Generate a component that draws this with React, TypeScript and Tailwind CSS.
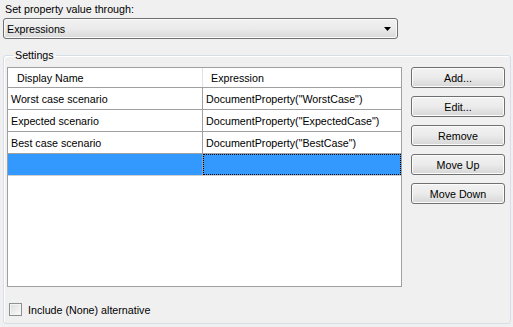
import * as React from "react";

const rows = [
	{ name: "Worst case scenario", expr: 'DocumentProperty("WorstCase")' },
	{ name: "Expected scenario", expr: 'DocumentProperty("ExpectedCase")' },
	{ name: "Best case scenario", expr: 'DocumentProperty("BestCase")' },
];

const buttons = ["Add...", "Edit...", "Remove", "Move Up", "Move Down"];

function WinButton({ label }: { label: string }) {
	return (
		<button
			type="button"
			className="w-[94px] h-[21px] rounded-[3px] border border-[#707070] bg-gradient-to-b from-[#f2f2f2] via-[#ebebeb] to-[#d6d6d6] text-black text-[10.7px] leading-[14px] shadow-[inset_0_0_0_1px_#fcfcfc]"
		>
			{label}
		</button>
	);
}

export default function App() {
	return (
		<div className="w-[513px] h-[327px] bg-[#f0f0f0] pt-[2px] px-[3px] text-[10.7px] leading-[14px] text-black font-['Liberation_Sans',Arial,sans-serif]">
			<div className="pl-[2px] h-[14px]">Set property value through:</div>

			<div className="mt-[2px] w-[395px] h-[21px] rounded-[3px] border border-[#707070] bg-gradient-to-b from-[#f2f2f2] via-[#ebebeb] to-[#d9d9d9] shadow-[inset_0_0_0_1px_#fafafa] flex items-center pl-[3px] pr-[6px]">
				<span className="flex-1">Expressions</span>
				<svg width="7" height="4" viewBox="0 0 7 4" className="mt-[1px]">
					<path d="M0 0h7L3.5 4z" fill="#000" />
				</svg>
			</div>

			<fieldset className="mt-[9px] w-[508px] h-[276px] border border-[#d5dfe5] rounded-[3px] pl-[3px] shadow-[inset_1px_1px_0_#fff]">
				<legend className="ml-[6px] px-[2px] leading-[14px]">Settings</legend>

				<div className="flex mt-[5px]">
					<div className="w-[395px] h-[220px] border border-[#a0a0a0] bg-white">
						<div className="flex h-[20px] border-b border-[#a0a0a0] bg-white">
							<div className="w-[195px] border-r border-[#e3e3e3] pl-[9px] flex items-center">
								Display Name
							</div>
							<div className="flex-1 pl-[8px] flex items-center">Expression</div>
						</div>
						{rows.map((r) => (
							<div key={r.name} className="flex h-[22px] border-b border-[#a0a0a0]">
								<div className="w-[195px] border-r border-[#a0a0a0] pl-[3px] flex items-center">
									{r.name}
								</div>
								<div className="flex-1 pl-[3px] flex items-center">{r.expr}</div>
							</div>
						))}
						<div className="flex h-[22px] border-b border-[#d0d0d0]">
							<div className="w-[195px] border-r border-[#a0a0a0] bg-[#3399ff]" />
							<div className="flex-1 bg-[#3399ff] border border-dotted border-black" />
						</div>
					</div>

					<div className="ml-[9px] flex flex-col gap-[8px]">
						{buttons.map((b) => (
							<WinButton key={b} label={b} />
						))}
					</div>
				</div>

				<label className="mt-[16px] ml-[2px] flex items-center gap-[6px] h-[13px]">
					<span className="w-[13px] h-[13px] border border-[#8e8f8f] bg-gradient-to-br from-[#dcdcdc] to-[#fbfbfb] shadow-[inset_0_0_0_1px_#f4f4f4]" />
					<span>Include (None) alternative</span>
				</label>
			</fieldset>
		</div>
	);
}
